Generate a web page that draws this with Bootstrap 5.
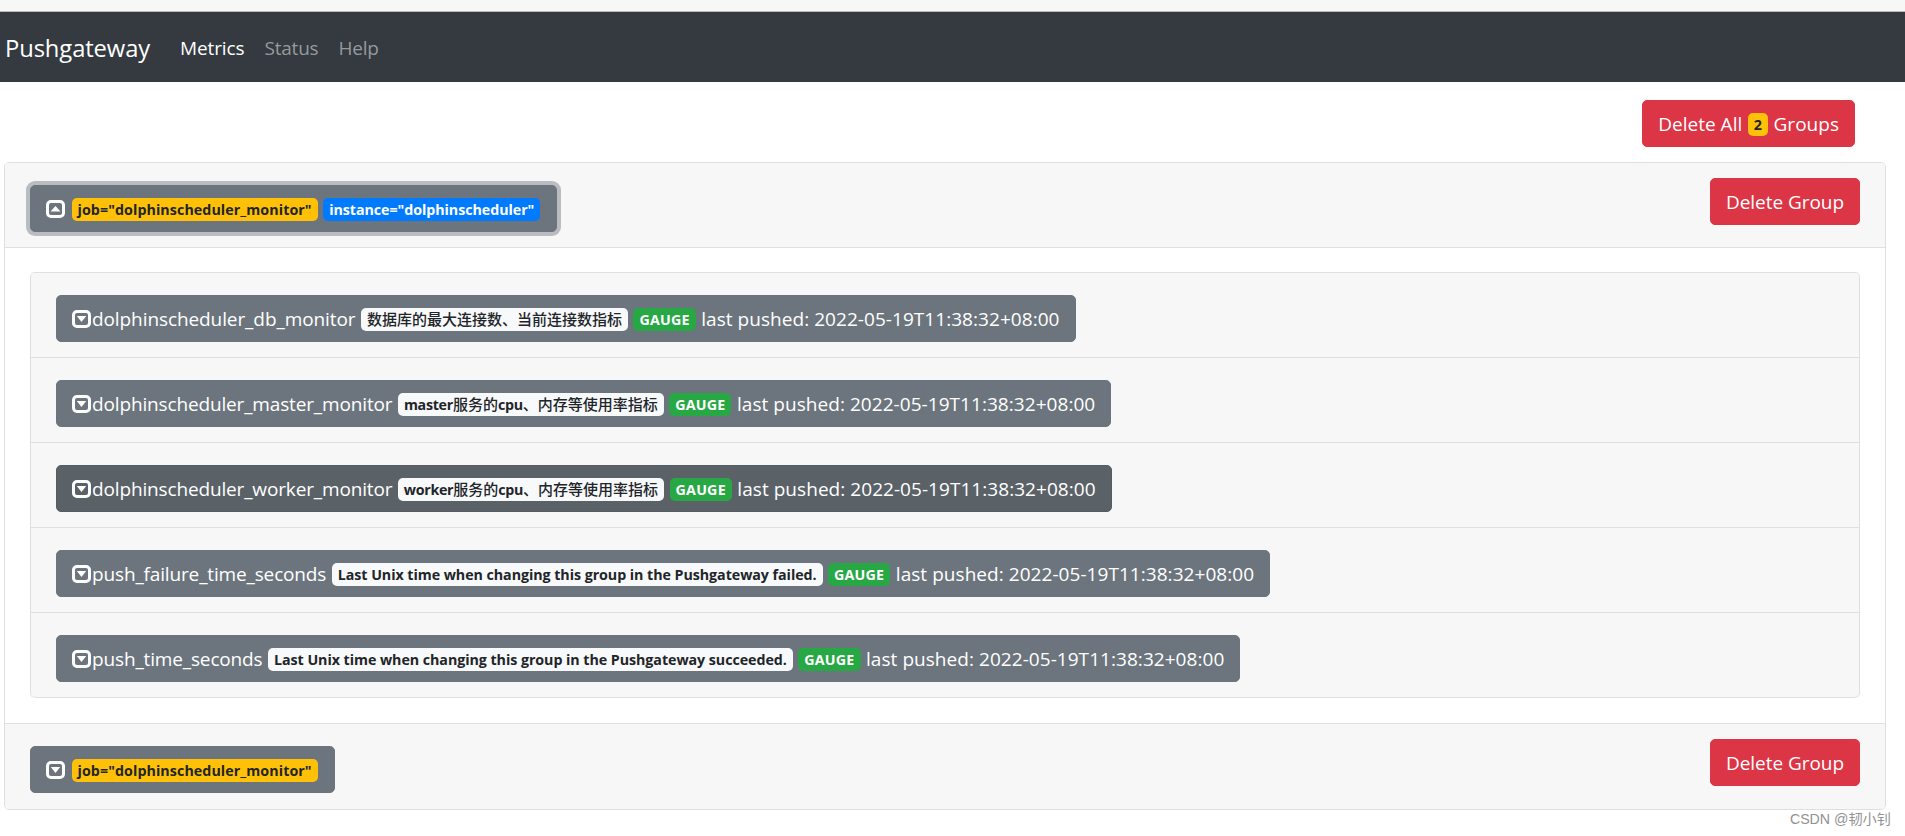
<!DOCTYPE html>
<html lang="zh-CN">
<head>
<meta charset="utf-8">
<title>Pushgateway</title>
<link rel="stylesheet" href="https://cdn.jsdelivr.net/npm/bootstrap@5.3.0/dist/css/bootstrap.min.css">
<script src="https://cdn.jsdelivr.net/npm/bootstrap@5.3.0/dist/js/bootstrap.bundle.min.js"></script>
<style>
html { font-size: 20px; }
body { font: 400 19px/30px "Open Sans", "Noto Sans CJK SC", sans-serif; background: #fff; overflow: hidden; height: 836px; }
.top-strip { height: 12px; background: #f7f7f7; border-bottom: 1px solid #b9bbbd; }
.main-nav { height: 70px; background: #343a40; padding: 2px 5px 0; }
.main-nav .navbar-brand { font-size: 23.75px; letter-spacing: -.1px; width: 145px; margin-right: 20px; padding: 0; color: #fff; white-space: nowrap; }
.main-nav .navbar-nav { flex-direction: row; }
.main-nav .nav-link { padding: 10px; color: #97999c; letter-spacing: -.2px; }
.main-nav .nav-link.active { color: #fff; letter-spacing: -.12px; }
.btn { font-size: 19px; line-height: 30px; border-radius: 5px; padding: 7.5px 15px; height: 47px; display: inline-flex; align-items: center; gap: 5.5px; white-space: nowrap; }
.btn-danger { --bs-btn-bg: #dc3545; --bs-btn-border-color: #dc3545; letter-spacing: -.05px; }
.btn-all { letter-spacing: .02px; }
.btn-secondary { --bs-btn-bg: #6c757d; --bs-btn-border-color: #6c757d; }
.btn-secondary.hovered { --bs-btn-bg: #5a6268; --bs-btn-border-color: #545b62; }
.btn-secondary.focused { box-shadow: 0 0 0 4px #b9bdc1; }
.btn .badge { font-size: 14.25px; line-height: 23px; height: 23px; padding: 0 6px; border-radius: 5px; font-weight: 700; margin-top: 2px; top: 0; }
.btn .badge .zh { font-size: 15px; font-weight: 500; letter-spacing: 0; }
.bg-job { background: #ffc107; color: #212529; letter-spacing: .08px; }
.bg-inst { background: #007bff; color: #fff; letter-spacing: -.05px; }
.bg-gauge { background: #28a745; color: #fff; letter-spacing: .2px; }
.bg-help { background: #f8f9fa; color: #212529; letter-spacing: -.05px; }
.bg-mixed { letter-spacing: -.3px; }
.metric-name { display: inline-flex; align-items: center; letter-spacing: -.15px; }
.metric-name.name-db { letter-spacing: -.09px; }
.pushed { letter-spacing: .05px; }
.toggle-icon { width: 20px; height: 18px; flex: none; display: block; }
.actions { height: 80px; padding: 18px 50px 0 0; }
.groups { margin: 0 19px 0 4px; border: 1px solid #dfdfdf; border-radius: 5px; }
.group-head { background: #f7f7f7; border: 0; border-bottom: 1px solid #dfdfdf; padding: 15px 25px 15px 25px; display: flex; justify-content: space-between; align-items: flex-start; height: 85px; border-radius: 4px 4px 0 0 !important; }
.group-head .btn-secondary { margin-top: 7px; padding-right: 16px; }
.group-body { padding: 24px 25px 25px 25px; border-bottom: 1px solid #dfdfdf; }
.metrics { border: 1px solid #dfdfdf; border-radius: 5px; border-bottom: 0; overflow: hidden; }
.metric-row { height: 85px; background: #f7f7f7; border-bottom: 1px solid #dfdfdf; padding: 22px 25px 0; }
.metrics .metric-row:last-child { border-radius: 0 0 5px 5px; }
.last-head { border-bottom: 0; border-radius: 0 0 4px 4px !important; }
.watermark { position: absolute; right: 14px; bottom: 6px; font: 14.2px/22px "Liberation Sans", "Noto Sans CJK SC", sans-serif; color: #929292; white-space: nowrap; }
</style>
</head>
<body>
<svg width="0" height="0" class="position-absolute">
  <symbol id="down" viewBox="0 0 20 18"><rect x="1.5" y="1.5" width="16" height="15" rx="3.5" fill="none" stroke="#fff" stroke-width="3"/><path d="M4.8 6h9.4L9.5 12z" fill="#fff"/></symbol>
  <symbol id="up" viewBox="0 0 20 18"><rect x="1.5" y="1.5" width="16" height="15" rx="3.5" fill="none" stroke="#fff" stroke-width="3"/><path d="M4.5 11.5h10L9.5 6z" fill="#fff"/></symbol>
</svg>
<div class="top-strip"></div>
<nav class="navbar main-nav justify-content-start">
  <a class="navbar-brand" href="#">Pushgateway</a>
  <div class="navbar-nav">
    <a class="nav-link active" href="#">Metrics</a>
    <a class="nav-link" href="#">Status</a>
    <a class="nav-link" href="#">Help</a>
  </div>
</nav>
<div class="actions d-flex justify-content-end align-items-start">
  <button class="btn btn-danger btn-all"><span>Delete All</span><span class="badge bg-job">2</span><span>Groups</span></button>
</div>
<main class="groups">
  <div class="group-head">
    <button class="btn btn-secondary focused"><svg class="toggle-icon"><use href="#up"/></svg><span class="badge bg-job">job="dolphinscheduler_monitor"</span><span class="badge bg-inst">instance="dolphinscheduler"</span></button>
    <button class="btn btn-danger">Delete Group</button>
  </div>
  <div class="group-body">
    <div class="metrics">
      <div class="metric-row"><button class="btn btn-secondary"><span class="metric-name name-db"><svg class="toggle-icon"><use href="#down"/></svg>dolphinscheduler_db_monitor</span><span class="badge bg-help"><span class="zh">数据库的最大连接数、当前连接数指标</span></span><span class="badge bg-gauge">GAUGE</span><span class="pushed">last pushed: 2022-05-19T11:38:32+08:00</span></button></div>
      <div class="metric-row"><button class="btn btn-secondary"><span class="metric-name"><svg class="toggle-icon"><use href="#down"/></svg>dolphinscheduler_master_monitor</span><span class="badge bg-help bg-mixed">master<span class="zh">服务的</span>cpu<span class="zh">、内存等使用率指标</span></span><span class="badge bg-gauge">GAUGE</span><span class="pushed">last pushed: 2022-05-19T11:38:32+08:00</span></button></div>
      <div class="metric-row"><button class="btn btn-secondary hovered"><span class="metric-name"><svg class="toggle-icon"><use href="#down"/></svg>dolphinscheduler_worker_monitor</span><span class="badge bg-help bg-mixed">worker<span class="zh">服务的</span>cpu<span class="zh">、内存等使用率指标</span></span><span class="badge bg-gauge">GAUGE</span><span class="pushed">last pushed: 2022-05-19T11:38:32+08:00</span></button></div>
      <div class="metric-row"><button class="btn btn-secondary"><span class="metric-name"><svg class="toggle-icon"><use href="#down"/></svg>push_failure_time_seconds</span><span class="badge bg-help">Last Unix time when changing this group in the Pushgateway failed.</span><span class="badge bg-gauge">GAUGE</span><span class="pushed">last pushed: 2022-05-19T11:38:32+08:00</span></button></div>
      <div class="metric-row"><button class="btn btn-secondary"><span class="metric-name"><svg class="toggle-icon"><use href="#down"/></svg>push_time_seconds</span><span class="badge bg-help">Last Unix time when changing this group in the Pushgateway succeeded.</span><span class="badge bg-gauge">GAUGE</span><span class="pushed">last pushed: 2022-05-19T11:38:32+08:00</span></button></div>
    </div>
  </div>
  <div class="group-head last-head">
    <button class="btn btn-secondary"><svg class="toggle-icon"><use href="#down"/></svg><span class="badge bg-job">job="dolphinscheduler_monitor"</span></button>
    <button class="btn btn-danger">Delete Group</button>
  </div>
</main>
<div class="watermark">CSDN @韧小钊</div>
</body>
</html>
